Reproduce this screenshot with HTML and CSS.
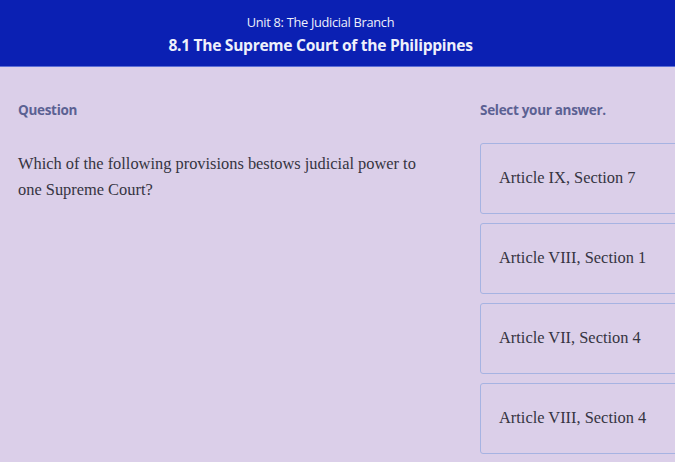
FILE: index.html
```html
<!DOCTYPE html>
<html>
<head>
<meta charset="utf-8">
<link rel="stylesheet" href="styles.css">
</head>
<body>
<header class="topbar">
  <div class="unit">Unit 8: The Judicial Branch</div>
  <div class="lesson">8.1 The Supreme Court of the Philippines</div>
</header>
<main class="quiz">
  <section class="question-col">
    <div class="label">Question</div>
    <p class="prompt">Which of the following provisions bestows judicial power to one Supreme Court?</p>
  </section>
  <section class="answer-col">
    <div class="label">Select your answer.</div>
    <div class="choices">
      <div class="choice">Article IX, Section 7</div>
      <div class="choice">Article VIII, Section 1</div>
      <div class="choice">Article VII, Section 4</div>
      <div class="choice">Article VIII, Section 4</div>
    </div>
  </section>
</main>
</body>
</html>
```
FILE: styles.css
```css
html, body {
  margin: 0;
  padding: 0;
  height: 100%;
  overflow: hidden;
}
body {
  background: #dbcfe9;
  font-family: "Open Sans", "Liberation Sans", sans-serif;
}
.topbar {
  height: 67px;
  background: #0b20b3;
  border-bottom: 1px solid #5d6fd6;
  box-sizing: border-box;
  display: flex;
  flex-direction: column;
  align-items: center;
  padding: 13px 34px 0 0;
  color: #eef0fb;
}
.unit {
  font-size: 12.8px;
  letter-spacing: -0.3px;
  line-height: 18px;
}
.lesson {
  font-size: 15.6px;
  font-weight: 700;
  letter-spacing: -0.3px;
  line-height: 22px;
  margin-top: 3px;
}
.quiz {
  display: grid;
  grid-template-columns: 462px 230px;
  padding: 33px 0 0 18px;
}
.label {
  font-size: 13.5px;
  font-weight: 700;
  color: #5b6193;
  letter-spacing: -0.3px;
  line-height: 20px;
}
.prompt {
  margin: 31px 0 0;
  width: 425px;
  font-family: "Liberation Serif", serif;
  font-size: 16.4px;
  line-height: 26px;
  color: #353441;
}
.choices {
  display: flex;
  flex-direction: column;
  gap: 9px;
  margin-top: 23px;
}
.choice {
  height: 71px;
  box-sizing: border-box;
  border: 1.5px solid #a6b3e2;
  border-radius: 3px;
  display: flex;
  align-items: center;
  padding: 0 0 2px 18px;
  font-family: "Liberation Serif", serif;
  font-size: 16.4px;
  color: #353441;
}
```
